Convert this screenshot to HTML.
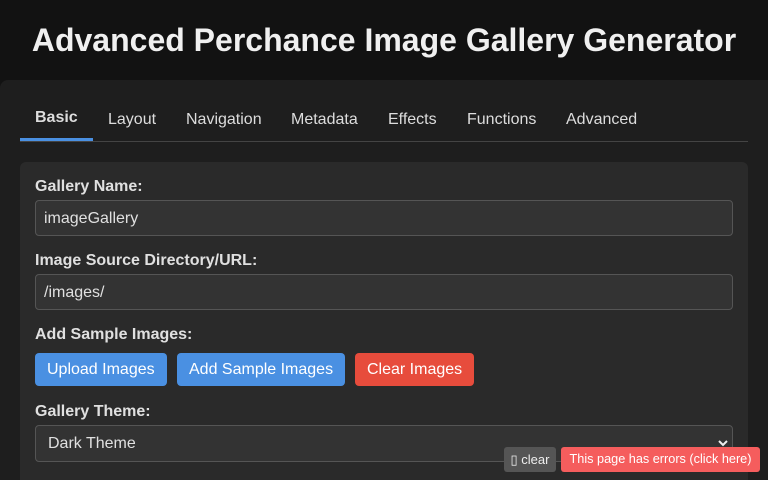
<!DOCTYPE html>
<html style="width:768px;height:480px;overflow:hidden"><head><style>
*{box-sizing:border-box;margin:0;padding:0}
body{width:768px;height:480px;overflow:hidden;background:#121212;font-family:"Liberation Sans",sans-serif;color:#e0e0e0;position:relative}
h1{position:absolute;top:20px;left:0;width:768px;text-align:center;font-size:32px;font-weight:bold;color:#f0f0f0;line-height:40px}
.cont{position:absolute;left:0;top:80px;width:776px;height:420px;background:#1e1e1e;border-radius:8px}
.tabs{position:absolute;left:20px;top:98px;width:728px;height:44px;border-bottom:1px solid #444}
.tab{position:absolute;top:2px;height:41px;font-size:16px;color:#ddd;line-height:40px}
.tab.act{font-weight:bold;top:0;height:43px;border-bottom:3px solid #4a90e2;line-height:40px;padding:0 15px;left:0}
.panel{position:absolute;left:20px;top:162px;width:728px;height:330px;background:#2a2a2a;border-radius:6px}
.lbl{position:absolute;left:35px;font-size:16px;font-weight:bold;color:#e0e0e0}
.inp{position:absolute;left:35px;width:698px;height:36px;background:#333;border:1px solid #555;border-radius:4px;font-size:16px;line-height:35px;padding-left:8px;color:#e0e0e0}
.btn{position:absolute;top:353px;height:33px;border-radius:4px;color:#fff;font-size:16px;line-height:34px;padding:0 12px}
</style></head><body>
<h1>Advanced Perchance Image Gallery Generator</h1>
<div class="cont"></div>
<div class="tabs">
<div class="tab act">Basic</div>
<div class="tab" style="left:88px">Layout</div>
<div class="tab" style="left:166px">Navigation</div>
<div class="tab" style="left:271px">Metadata</div>
<div class="tab" style="left:368px">Effects</div>
<div class="tab" style="left:447px">Functions</div>
<div class="tab" style="left:546px">Advanced</div>
</div>
<div class="panel"></div>
<div class="lbl" style="top:178px">Gallery Name:</div>
<div class="inp" style="top:200px">imageGallery</div>
<div class="lbl" style="top:252px">Image Source Directory/URL:</div>
<div class="inp" style="top:274px">/images/</div>
<div class="lbl" style="top:326px">Add Sample Images:</div>
<div class="btn" style="left:35px;background:#4a90e2">Upload Images</div>
<div class="btn" style="left:177px;background:#4a90e2">Add Sample Images</div>
<div class="btn" style="left:355px;background:#e74c3c">Clear Images</div>
<div class="lbl" style="top:403px">Gallery Theme:</div>
<div class="inp" style="top:425px;height:37px;padding-left:12px;line-height:36px">Dark Theme<svg style="position:absolute;right:4px;top:14px" width="10" height="7" viewBox="0 0 10 7"><path d="M1 1L5 5L9 1" stroke="#eee" stroke-width="2" fill="none"/></svg></div>
<div style="position:absolute;left:504px;top:447px;width:52px;height:25px;background:#555;border-radius:3px;color:#eee;font-size:13px;line-height:25px;text-align:center">▯ clear</div>
<div style="position:absolute;left:561px;top:447px;width:199px;height:25px;background:#f55d5d;border-radius:3px;color:#fff;font-size:12.7px;line-height:25px;text-align:center">This page has errors (click here)</div>
</body></html>
